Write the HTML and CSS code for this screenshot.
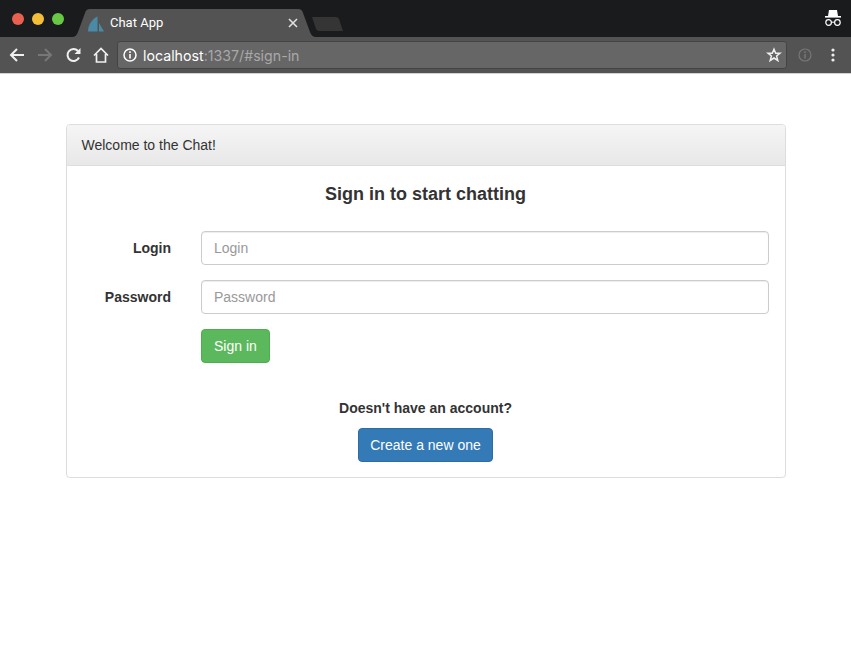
FILE: index.html
```html
<!DOCTYPE html>
<html lang="en">
<head>
<meta charset="utf-8">
<title>Chat App</title>
<link rel="stylesheet" href="styles.css">
</head>
<body>
<div class="chrome">
  <div class="tabbar">
    <div class="lights"><i class="light red"></i><i class="light yellow"></i><i class="light green"></i></div>
    <div class="tab">
      <svg class="tab-shape" width="246" height="28" viewBox="0 0 246 28"><path d="M0 28C3 28 5 26 6 23L13 4C14 1 15 0 18 0H226C229 0 230 1 231 4L238 23C239 26 241 28 244 28Z" fill="#535353"/></svg>
      <svg class="favicon" width="16" height="16" viewBox="0 0 16 16"><path d="M0 15.500C0 9 4 3 9.500 .5V15.500Z" fill="#4a8aa6"/><path d="M11 7L16 15.500H11Z" fill="#4a8aa6"/></svg>
      <span class="tab-title">Chat App</span>
      <svg class="tab-close" width="10" height="10" viewBox="0 0 10 10"><path d="M1 1L9 9M9 1L1 9" stroke="#e0e0e0" stroke-width="1.600"/></svg>
    </div>
    <svg class="newtab" width="34" height="16" viewBox="0 0 34 16"><path d="M2 1H26Q28 1 29 3L33 15H9Q7 15 6 13Z" fill="#353535"/></svg>
    <svg class="incognito" width="18" height="20" viewBox="0 0 18 20"><path d="M5 2H13L14 8H4Z" fill="#fff"/><rect x="1" y="8" width="16" height="1.600" fill="#fff"/><circle cx="4.600" cy="14.500" r="2.800" fill="none" stroke="#fff" stroke-width="1.200"/><circle cx="13.400" cy="14.500" r="2.800" fill="none" stroke="#fff" stroke-width="1.200"/><path d="M7.400 14.200H10.600" stroke="#fff"/></svg>
  </div>
  <div class="toolbar">
    <svg class="tool" width="16" height="16" viewBox="0 0 16 16"><path d="M15 8H2M8 2L2 8L8 14" fill="none" stroke="#f0f0f0" stroke-width="2"/></svg>
    <svg class="tool" width="16" height="16" viewBox="0 0 16 16"><path d="M1 8H14M8 2L14 8L8 14" fill="none" stroke="#777" stroke-width="2"/></svg>
    <svg class="tool" width="16" height="16" viewBox="0 0 16 16"><path d="M14 10.500A6 6 0 1 1 13 4" fill="none" stroke="#f0f0f0" stroke-width="2"/><path d="M15.500 1V7H9.500Z" fill="#f0f0f0"/></svg>
    <svg class="tool" width="16" height="16" viewBox="0 0 16 16"><path d="M1 8.500L8 1.500L15 8.500M3.500 7V15H12.500V7" fill="none" stroke="#f0f0f0" stroke-width="1.700"/></svg>
    <div class="omnibox">
      <svg class="info" width="14" height="14" viewBox="0 0 14 14"><circle cx="7" cy="7" r="6" fill="none" stroke="#fff" stroke-width="1.500"/><path d="M7 6V10.500M7 3.300V5" stroke="#fff" stroke-width="1.600"/></svg>
      <span class="url"><span class="host">localhost</span>:1337/#sign-in</span>
      <svg class="star" width="16" height="16" viewBox="0 0 16 16"><path d="M8 2.200L9.700 6.200H14L10.600 9L11.800 13.500L8 11L4.200 13.500L5.400 9L2 6.200H6.300Z" fill="none" stroke="#f0f0f0" stroke-width="1.500"/></svg>
    </div>
    <svg class="ext" width="14" height="14" viewBox="0 0 14 14"><circle cx="7" cy="7" r="6" fill="none" stroke="#777" stroke-width="1.200"/><path d="M7 6V10.500M7 3.300V5" stroke="#777" stroke-width="1.500"/></svg>
    <svg class="menu" width="4" height="14" viewBox="0 0 4 14"><circle cx="2" cy="2" r="1.600" fill="#eee"/><circle cx="2" cy="7" r="1.600" fill="#eee"/><circle cx="2" cy="12" r="1.600" fill="#eee"/></svg>
  </div>
</div>
<main class="page">
  <section class="panel">
    <header class="panel-heading">Welcome to the Chat!</header>
    <div class="panel-body">
      <h3 class="title">Sign in to start chatting</h3>
      <form class="form">
        <div class="row"><label class="label">Login</label><input class="input" placeholder="Login"></div>
        <div class="row"><label class="label">Password</label><input class="input" placeholder="Password"></div>
        <div class="row"><span class="label"></span><button type="button" class="btn btn-green">Sign in</button></div>
      </form>
      <div class="signup">
        <p class="signup-text">Doesn't have an account?</p>
        <button type="button" class="btn btn-blue">Create a new one</button>
      </div>
    </div>
  </section>
</main>
</body>
</html>
```

FILE: styles.css
```css
* { box-sizing: border-box; }
html, body { margin: 0; padding: 0; background: #fff; }
body { font-family: "Liberation Sans", Arial, sans-serif; font-size: 14px; color: #333; }

.chrome { height: 74px; border-bottom: 1px solid #d0d0d0; }
.tabbar { height: 37px; background: #1a1b1d; display: flex; position: relative; padding-top: 9px; }
.lights { display: flex; gap: 8px; padding: 4px 0 0 12px; width: 72px; height: 28px; }
.light { display: block; width: 12px; height: 12px; border-radius: 50%; }
.red { background: #e8604f; }
.yellow { background: #f4bf38; }
.green { background: #68c846; }
.tab { position: relative; width: 240px; height: 28px; display: flex; align-items: center; }
.tab-shape { position: absolute; left: 0; top: 0; }
.favicon { position: relative; margin: 1px 0 0 16px; flex: none; }
.tab-title { position: relative; margin: 0 0 2px 6px; color: #fff; font: 13px Roboto, Inter, sans-serif; }
.tab-close { position: absolute; left: 216px; top: 9px; }
.newtab { position: absolute; left: 310px; top: 16px; }
.incognito { position: absolute; left: 824px; top: 8px; }

.toolbar { height: 36px; background: #535353; display: flex; align-items: center; padding-left: 9px; }
.tool { margin-right: 12px; flex: none; }
.omnibox { margin-left: -4px; width: 670px; height: 28px; background: #666; border: 1px solid #444; border-radius: 3px; display: flex; align-items: center; padding: 0 4px 0 5px; flex: none; }
.info { flex: none; }
.url { margin-left: 6px; flex: 1; color: #a9a9a9; font: 14.200px Inter, Roboto, sans-serif; }
.host { color: #fff; }
.ext { margin-left: 11px; flex: none; }
.menu { margin-left: 19px; flex: none; }

.page { padding: 50px 65px 0 66px; }
.panel { border: 1px solid #ddd; border-radius: 4px; width: 720px; height: 354px; box-shadow: 0 1px 1px rgba(0,0,0,.05); }
.panel-heading { height: 41px; padding: 0 14.500px; display: flex; align-items: center; color: #333; background: linear-gradient(#f5f5f5, #e8e8e8); border-bottom: 1px solid #ddd; border-radius: 3px 3px 0 0; }
.panel-body { padding: 15px 16px 15px 15px; }
.title { margin: 3px 0 0; height: 20px; line-height: 20px; text-align: center; font-size: 18px; font-weight: bold; color: #333; }
.form { margin-top: 27px; display: flex; flex-direction: column; gap: 15px; }
.row { display: flex; align-items: center; }
.label { width: 89px; margin-right: 30px; text-align: right; font-weight: bold; }
.input { flex: 1; height: 34px; padding: 6px 12px; font: 14px "Liberation Sans", Arial, sans-serif; color: #555; border: 1px solid #ccc; border-radius: 4px; background: #fff; box-shadow: inset 0 1px 1px rgba(0,0,0,.075); }
.input::placeholder { color: #999; opacity: 1; }
.btn { height: 34px; padding: 0 12px; font: 14px "Liberation Sans", Arial, sans-serif; color: #fff; border: 1px solid; border-radius: 4px; }
.btn-green { background: #5cb85c; border-color: #4cae4c; }
.btn-blue { padding: 0 11px; background: #337ab7; border-color: #2e6da4; }
.signup { margin-top: 35px; text-align: center; }
.signup-text { margin: 0 0 10px; height: 20px; line-height: 20px; font-weight: bold; }
```
